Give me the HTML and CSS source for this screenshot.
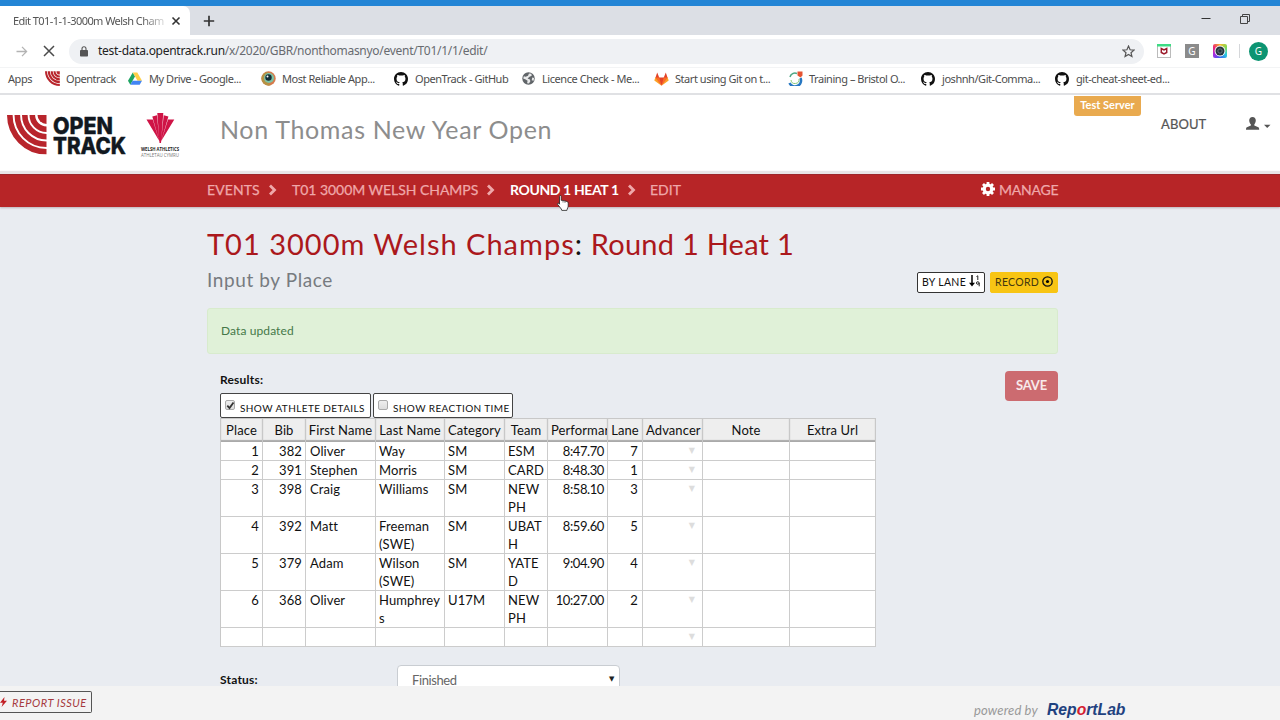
FILE: index.html
```html
<!DOCTYPE html>
<html lang="en">
<head>
<meta charset="utf-8">
<title>Edit T01-1-1-3000m Welsh Champs</title>
<link rel="stylesheet" href="styles.css">
</head>
<body>
<svg class="defs" width="0" height="0">
  <defs>
    <symbol id="github" viewBox="0 0 16 16"><path fill="#111" d="M8 0C3.58 0 0 3.58 0 8c0 3.54 2.29 6.53 5.47 7.59.4.07.55-.17.55-.38v-1.5c-2.23.48-2.7-.94-2.7-.94-.36-.92-.89-1.17-.89-1.17-.73-.5.05-.49.05-.49.8.06 1.23.83 1.23.83.71 1.23 1.87.87 2.33.67.07-.52.28-.87.5-1.07-1.78-.2-3.64-.89-3.64-3.95 0-.87.31-1.59.82-2.15-.08-.2-.36-1.02.08-2.12 0 0 .67-.21 2.2.82a7.6 7.6 0 0 1 4 0c1.53-1.04 2.2-.82 2.2-.82.44 1.1.16 1.92.08 2.12.51.56.82 1.27.82 2.15 0 3.07-1.87 3.75-3.65 3.95.29.25.54.73.54 1.48v2.2c0 .21.15.46.55.38A8 8 0 0 0 16 8c0-4.42-3.58-8-8-8z"/></symbol>
    <symbol id="track" viewBox="0 0 40 40"><path fill="#b8252c" d="M30.500 0.500H39.500V9.500A9 9 0 0 1 30.500 0.500z"/><g fill="none" stroke="#b8252c" stroke-width="5.600"><path d="M25.300 .5A14.200 14.200 0 0 0 39.500 14.700"/><path d="M17.800 .5A21.700 21.700 0 0 0 39.500 22.200"/><path d="M10.300 .5A29.200 29.200 0 0 0 39.500 29.700"/><path d="M2.800 .5A36.700 36.700 0 0 0 39.500 37.200"/></g></symbol>
    <symbol id="chev" viewBox="0 0 10 12"><path d="M2 1.500 6.500 6 2 10.500" fill="none" stroke="#efa8aa" stroke-width="2.800"/></symbol>
  </defs>
</svg>

<div class="tabs">
  <div class="tab"><span class="tab-title">Edit T01-1-1-3000m Welsh Cham</span>
    <svg width="10" height="10" viewBox="0 0 10 10"><path d="M1.500 1.500l7 7m0-7l-7 7" stroke="#333" stroke-width="1.600"/></svg></div>
  <svg class="plus" width="12" height="12" viewBox="0 0 12 12"><path d="M6 .8v10.400M.8 6h10.400" stroke="#333" stroke-width="1.700"/></svg>
  <div class="win">
    <svg width="10" height="10" viewBox="0 0 10 10"><path d="M.5 4.500h9" stroke="#333"/></svg>
    <svg width="10" height="10" viewBox="0 0 10 10" fill="none" stroke="#444"><path d="M.5 2.500h7v7h-7zM2.500 2.500v-2h7v7h-2"/></svg>
  </div>
</div>

<div class="toolbar">
  <svg class="fwd" width="12" height="11" viewBox="0 0 13 12" fill="none" stroke="#b3b3b3" stroke-width="1.400"><path d="M.5 6h10.500M6.500 1l5 5-5 5"/></svg>
  <svg class="stop" width="12" height="12" viewBox="0 0 12 12"><path d="M1 1l10 10m0-10L1 11" stroke="#4b4b4b" stroke-width="1.500"/></svg>
  <div class="url">
    <svg width="8" height="11" viewBox="0 0 8 11"><rect y="4" width="8" height="6.500" rx=".8" fill="#555"/><path d="M2 4.500V2.700a2 2 0 0 1 4 0v1.800" fill="none" stroke="#555" stroke-width="1.100"/></svg>
    <span class="addr"><b>test-data.opentrack.run</b>/x/2020/GBR/nonthomasnyo/event/T01/1/1/edit/</span>
    <svg width="13" height="13" viewBox="0 0 14 14"><path d="M7 1.200l1.700 3.900 4.200.4-3.200 2.800 1 4.200L7 10.300l-3.700 2.200 1-4.200L1.100 5.500l4.200-.4z" fill="none" stroke="#555" stroke-width="1.300"/></svg>
  </div>
  <div class="exts">
    <svg width="14" height="14" viewBox="0 0 14 14"><rect x=".5" y=".5" width="13" height="13" fill="#fff" stroke="#bbb"/><path fill="#3ddc84" d="M0 0h14v2.500H0z"/><path d="M4.300 4.500v4L7 10l2.700-1.500v-4L7 6z" fill="none" stroke="#9c1b2b" stroke-width="1.500"/></svg>
    <svg width="14" height="14" viewBox="0 0 14 14"><path fill="#8b8b8b" d="M0 0h14v14H0z"/><text x="7" y="10.500" text-anchor="middle" class="g-mark">G</text></svg>
    <div class="camera"><svg width="14" height="14" viewBox="0 0 14 14"><circle cx="7" cy="7" r="5.400" fill="#fff"/><circle cx="7" cy="7" r="4.500" fill="#26343d"/><circle cx="7" cy="7" r="2.200" fill="none" stroke="#63757f"/></svg></div>
    <span class="sep"></span>
    <span class="avatar">G</span>
  </div>
</div>

<div class="bookmarks">
  <span class="bm">Apps</span>
  <span class="bm"><svg width="15" height="15"><use href="#track"/></svg>Opentrack</span>
  <span class="bm"><svg width="14" height="13" viewBox="0 0 14 13"><path fill="#1da462" d="M4.800.5 0 8.800l2.300 3.900L7 4.400z"/><path fill="#ffcf48" d="M4.800.5h4.500L14 8.700H9.500z"/><path fill="#4285f4" d="M4.600 8.700H14l-2.300 4H2.300z"/></svg>My Drive - Google...</span>
  <span class="bm"><svg width="15" height="15" viewBox="0 0 15 15"><circle cx="7.500" cy="7.500" r="7.200" fill="#d67b4c"/><path d="M1 5A7 7 0 0 0 10 14Q4 11 7 1Q3 1 1 5" fill="#b59244"/><circle cx="8" cy="7" r="5" fill="#7cc2a5"/><circle cx="7.500" cy="6.500" r="3.200" fill="#152d36"/><circle cx="6.500" cy="5.500" r="1" fill="#fff"/></svg>Most Reliable App...</span>
  <span class="bm"><svg width="14" height="14"><use href="#github"/></svg>OpenTrack - GitHub</span>
  <span class="bm wide"><svg width="13" height="13" viewBox="0 0 14 14"><circle cx="7" cy="7" r="6.700" fill="#616569"/><path d="M7.500 1.500 6.500 4 4 5 2 4.500 1.300 7 4 8l2 1.500L5.500 12l2 .3L9 10l-.500-2L6 7l2-2 2.500-1L10 2zM11 6l2 .5-.500 3L10.500 9z" fill="#e9eaeb"/></svg>Licence Check - Me...</span>
  <span class="bm"><svg width="15" height="14" viewBox="0 0 15 14"><path fill="#fca326" d="M.3 8.500 1.500 5 7.500 13.500 13.500 5l1.200 3.500-7.200 5.300z"/><path fill="#e24329" d="M1.500 5.500 3.200.5l2 5h4.600l2-5 1.700 5-6 8z"/><path fill="#fc6d26" d="M1.500 5.500h3.700l2.300 8zM13.500 5.500H9.800l-2.300 8z"/></svg>Start using Git on t...</span>
  <span class="bm"><svg width="15" height="15" viewBox="0 0 15 15" fill="none" stroke-width="2"><path d="M2 6a5 5 0 0 1 7-3.500" stroke="#50a886" stroke-width="1.500"/><path d="M12.500 7A5.500 5.500 0 0 1 1.500 12" stroke="#2777c2" stroke-width="2.500"/><path d="M11 8A4 4 0 0 1 3 9" stroke="#8ac978" stroke-width="1"/><path d="M9.500 .5h5v4l-2 2-3-2z" fill="#e55432"/></svg>Training – Bristol O...</span>
  <span class="bm"><svg width="14" height="14"><use href="#github"/></svg>joshnh/Git-Comma...</span>
  <span class="bm"><svg width="14" height="14"><use href="#github"/></svg>git-cheat-sheet-ed...</span>
</div>

<header class="site">
  <svg class="logo" width="122" height="42" viewBox="0 0 122 42"><use href="#track" width="40" height="40" y="0.500"/>
    <g class="logo-text"><text x="46" y="20" textLength="60" lengthAdjust="spacingAndGlyphs">OPEN</text><text x="46" y="40" textLength="73" lengthAdjust="spacingAndGlyphs">TRACK</text></g></svg>
  <svg class="welsh" width="40" height="46" viewBox="0 0 40 46"><path fill="#cf1446" d="M6.500 7.500h6.300l6.200 21zM12.300 4.500l4.700-1.200L19.500 30zM17.300 1h6L21 31h-1.500zM23.700 3.300l4.700 1.200L21 30zM28 7.500h6.300L21.500 28.500z"/>
    <text x="1" y="38.500" textLength="38" lengthAdjust="spacingAndGlyphs" class="w1">WELSH ATHLETICS</text><text x="1" y="44.500" textLength="38" lengthAdjust="spacingAndGlyphs" class="w2">ATHLETAU CYMRU</text></svg>
  <h2 class="meet">Non Thomas New Year Open</h2>
  <span class="test">Test Server</span>
  <span class="about">ABOUT</span>
  <svg class="user" width="25" height="14" viewBox="0 0 25 14" fill="#555"><path d="M6.500 0C8.600 0 9.900 1.500 9.800 3.600 9.700 5.300 9 6.700 8.300 7.500v1l4 1.700c.7.300.9 1.200.9 2.500H0c0-1.300.2-2.200.9-2.500l4-1.700v-1C4 6.700 3.300 5.300 3.200 3.600 3.100 1.500 4.400 0 6.500 0zM18 7.700h6.500L21.200 11.100z"/></svg>
</header>

<nav class="crumbs">
  <div class="inner">
    <span class="c1">EVENTS</span><svg width="10" height="12"><use href="#chev"/></svg>
    <span class="c2">T01 3000M WELSH CHAMPS</span><svg width="10" height="12"><use href="#chev"/></svg>
    <span class="c3">ROUND 1 HEAT 1</span><svg width="10" height="12"><use href="#chev"/></svg>
    <span class="c4">EDIT</span>
    <span class="manage"><svg width="14" height="14" viewBox="0 0 14 14"><circle cx="7" cy="7" r="3.800" fill="none" stroke="#fff" stroke-width="3.200"/><path d="M7 0v3M7 11v3M0 7h3M11 7h3M2 2l2.200 2.200M9.800 9.800 12 12M12 2 9.800 4.200M4.200 9.800 2 12" stroke="#fff" stroke-width="2.800"/></svg>MANAGE</span>
  </div>
  <svg class="cursor" width="12" height="16" viewBox="0 0 12 16"><path d="M2.500 1.300c0-1 1.700-1 1.700 0v4l1.600.2 1.500.3 1.500.4c1.500.3 2.400.8 2.400 2v3c0 1.200-.8 1.700-1 3l-.3 1.200H4.800L4.300 14 .7 9.500c-.7-1 .4-1.800 1.200-1l.6.7z" fill="#fff" stroke="#222" stroke-width=".8"/><path d="M6 5.600v2M8 6v2" stroke="#555" stroke-width=".7"/></svg>
</nav>

<main class="content">
  <h1><span>T01 3000m Welsh Champs</span>: <span class="round">Round 1 Heat 1</span></h1>
  <div class="subrow">
    <h3>Input by Place</h3>
    <span class="btn lane">BY LANE<svg width="11" height="12" viewBox="0 0 11 12"><path d="M3 0v9" stroke="#111" stroke-width="1.600"/><path d="M0 7.800h6L3 11.500z"/><path d="M7.500 1.500 8.800.8V5" fill="none" stroke="#222"/><circle cx="8.800" cy="8" r="1.300" fill="none" stroke="#222"/><path d="M10.200 8v3.300" stroke="#222"/></svg></span>
    <span class="btn record">RECORD<svg width="11" height="11" viewBox="0 0 11 11"><circle cx="5.500" cy="5.500" r="4.700" fill="none" stroke="#111" stroke-width="1.300"/><circle cx="5.500" cy="5.500" r="1.600"/></svg></span>
  </div>
  <div class="alert">Data updated</div>
  <div class="form">
    <div class="results-head"><b class="label">Results:</b><span class="save">SAVE</span></div>
    <div class="toggles">
      <span class="toggle details"><span class="check on"><svg width="9" height="9" viewBox="0 0 9 9"><path d="M1.300 4.700 3.500 7 7.500 1.500" fill="none" stroke="#333" stroke-width="1.800"/></svg></span>SHOW ATHLETE DETAILS</span>
      <span class="toggle reaction"><span class="check"></span>SHOW REACTION TIME</span>
    </div>
    <table>
      <colgroup><col class="k42"><col class="k43"><col class="k70"><col class="k69"><col class="k60"><col class="k43"><col class="k60"><col class="k35"><col class="k60"><col class="k87"><col class="k86"></colgroup>
      <thead><tr><th>Place</th><th>Bib</th><th>First Name</th><th>Last Name</th><th>Category</th><th>Team</th><th class="clip">Performar</th><th>Lane</th><th class="clip">Advancer</th><th>Note</th><th>Extra Url</th></tr></thead>
      <tbody>
        <tr class="r19"><td>1</td><td>382</td><td>Oliver</td><td>Way</td><td>SM</td><td>ESM</td><td>8:47.70</td><td>7</td><td>▼</td><td></td><td></td></tr>
        <tr class="r19"><td>2</td><td>391</td><td>Stephen</td><td>Morris</td><td>SM</td><td>CARD</td><td>8:48.30</td><td>1</td><td>▼</td><td></td><td></td></tr>
        <tr class="r37"><td>3</td><td>398</td><td>Craig</td><td>Williams</td><td>SM</td><td>NEW<br>PH</td><td>8:58.10</td><td>3</td><td>▼</td><td></td><td></td></tr>
        <tr class="r37"><td>4</td><td>392</td><td>Matt</td><td>Freeman<br>(SWE)</td><td>SM</td><td>UBAT<br>H</td><td>8:59.60</td><td>5</td><td>▼</td><td></td><td></td></tr>
        <tr class="r37"><td>5</td><td>379</td><td>Adam</td><td>Wilson<br>(SWE)</td><td>SM</td><td>YATE<br>D</td><td>9:04.90</td><td>4</td><td>▼</td><td></td><td></td></tr>
        <tr class="r37"><td>6</td><td>368</td><td>Oliver</td><td>Humphrey<br>s</td><td>U17M</td><td>NEW<br>PH</td><td>10:27.00</td><td>2</td><td>▼</td><td></td><td></td></tr>
        <tr class="r19"><td></td><td></td><td></td><td></td><td></td><td></td><td></td><td></td><td>▼</td><td></td><td></td></tr>
      </tbody>
    </table>
    <div class="status"><b class="label">Status:</b><span class="select">Finished<i>▼</i></span></div>
  </div>
</main>

<footer class="foot">
  <span class="issue"><svg width="7" height="10" viewBox="0 0 7 10"><path d="M4.500 0 0 5.700h2.800L1.600 10 7 3.800H4z" fill="#c22026"/></svg>REPORT ISSUE</span>
  <span class="powered">powered by</span>
  <span class="rl">Rep<em>o</em>rtLab</span>
</footer>
</body>
</html>
```
FILE: styles.css
```css
* { box-sizing: border-box; }
body { margin: 0; width: 1280px; height: 720px; overflow: hidden; display: flex; flex-direction: column; background: #fff; font-family: Lato, "Open Sans", sans-serif; color: #111; }
svg { flex: none; display: block; }
.defs { position: absolute; }
h1, h2, h3 { margin: 0; font-weight: 400; }

/* browser chrome */
.tabs, .toolbar, .bookmarks { font-family: "Noto Sans", sans-serif; flex: none; }
.tabs { height: 35px; border-top: 6px solid #2385d5; background: #dcdfe5; display: flex; align-items: center; }
.tab { width: 190px; height: 29px; background: #fff; border-radius: 0 7px 0 0; display: flex; align-items: center; padding-left: 13px; }
.tab-title { width: 153px; margin-right: 5px; font-size: 11px; letter-spacing: -.56px; white-space: nowrap; overflow: hidden; color: #555; -webkit-mask-image: linear-gradient(90deg, #000 84%, rgba(0,0,0,.15)); }
.plus { margin-left: 13px; }
.win { margin-left: auto; display: flex; gap: 29px; padding: 0 30px 3px 0; }
.toolbar { height: 33px; display: flex; align-items: center; border-bottom: 1px solid #f3f4f5; }
.fwd { margin-left: 16px; }
.stop { margin-left: 15px; }
.url { margin-left: 14px; width: 1075px; height: 25px; border-radius: 13px; background: #eff1f4; display: flex; align-items: center; padding: 0 9px 0 11px; }
.addr { flex: 1; margin-left: 10px; font-size: 12px; color: #686b70; letter-spacing: -.28px; line-height: 24px; }
.addr b { font-weight: 400; color: #222; }
.exts { flex: 1; display: flex; align-items: center; padding-left: 13px; }
.exts > svg { margin-right: 14px; }
.g-mark { font: 10px "Noto Sans", sans-serif; fill: #fff; }
.camera { width: 14px; height: 14px; border-radius: 2px; background: conic-gradient(#f5bf2c, #7ed957, #2acbe0, #3a62f0, #a52be2, #ed2476, #f5bf2c); }
.sep { width: 1px; height: 14px; background: #d5d7da; margin: 0 9px 0 12px; }
.avatar { width: 19px; height: 19px; border-radius: 50%; background: #0c9472; color: #fff; font-size: 10px; line-height: 19px; text-align: center; }
.bookmarks { height: 27px; display: grid; grid-template-columns: 37px 83px 133px 133px 127px 133px 134px 133px 134px 150px; padding: 0 0 4px 8px; border-bottom: 2px solid #e0e1e4; align-items: center; font-size: 11px; color: #4d4d4d; white-space: nowrap; letter-spacing: -.45px; }
.bm { display: flex; align-items: center; gap: 7px; }
.bm:nth-child(2), .bm:nth-child(4), .bm:nth-child(7), .bm:nth-child(8) { gap: 6px; }
.wide { padding-left: 1px; }

/* site header */
.site { height: 76px; flex: none; display: flex; align-items: flex-start; position: relative; }
.logo { margin: 19px 0 0 7px; }
.logo-text { font: 800 23px Inter, sans-serif; fill: #111820; stroke: #111820; stroke-width: .4px; stroke-linejoin: round; }
.welsh { margin: 17px 0 0 11px; }
.w1 { font: 700 4.500px "Open Sans", sans-serif; fill: #222; }
.w2 { font: 4.500px "Open Sans", sans-serif; fill: #777; }
.meet { margin: 18px 0 0 40px; width: 854px; font-size: 25px; line-height: 32px; color: #8d8d8d; letter-spacing: .67px; }
.test { width: 67px; height: 20px; margin-top: 1px; background: #e9aa4f; color: #fff; font-size: 11px; font-weight: 700; text-align: center; line-height: 18px; border-radius: 0 0 3px 3px; }
.about { margin: 20px 0 0 20px; font-size: 13px; line-height: 18px; color: #555; letter-spacing: .1px; -webkit-text-stroke: .2px; }
.user { position: absolute; left: 1246px; top: 22px; }

/* breadcrumb bar */
.crumbs { flex: none; height: 36px; background: #b72527; border-top: 3px solid #e8e4e6; position: relative; box-shadow: 0 1px 2px rgba(90,40,50,.3), inset 0 1px #9d262b; font-size: 14px; line-height: 20px; color: #efa8aa; -webkit-text-stroke: .25px; }
.inner { width: 852px; height: 32px; margin-left: 207px; display: flex; align-items: center; }
.inner > svg { margin-left: 8px; }
.c2, .c3, .c4 { margin-left: 14px; }
.c1 { width: 53px; letter-spacing: .1px; } .c2 { width: 186px; letter-spacing: -.04px; } .c3 { width: 109px; color: #fff; font-weight: 700; letter-spacing: -.38px; -webkit-text-stroke: 0; } .c4 { margin-left: 13px; }
.manage { margin-left: auto; width: 78px; display: flex; gap: 4px; align-items: center; white-space: nowrap; letter-spacing: -.2px; }
.manage svg { margin-top: -2px; }
.c1, .c2, .c3, .c4 { white-space: nowrap; }
.cursor { position: absolute; left: 557px; top: 21px; }

/* event content */
.content { flex: none; height: 479px; overflow: hidden; background: #e9ecf1; padding: 19px 0 0 207px; }
h1 { font-size: 29px; line-height: 36px; color: #111; letter-spacing: .67px; white-space: nowrap; }
h1 span { color: #ab181c; letter-spacing: 1px; }
h1 .round { letter-spacing: .25px; }
.subrow { width: 851px; height: 38px; display: flex; align-items: center; padding-top: 2px; }
h3 { flex: 1; font-size: 19px; line-height: 28px; margin-top: -4px; color: #777b80; letter-spacing: .6px; }
.btn { height: 21px; border: 1px solid #333; border-radius: 2px; background: #fff; font-size: 10.500px; letter-spacing: .3px; display: flex; align-items: center; justify-content: space-between; padding: 0 4px; white-space: nowrap; }
.lane { width: 68px; margin-right: 5px; }
.record { width: 68px; background: #f8c514; border-color: #f8c514; color: #43380f; }
.btn svg { margin-top: -2px; }
.alert { margin-top: 8px; width: 851px; height: 46px; border: 1px solid #d8ebcd; border-radius: 3px; background: #e0f1d8; color: #457848; font-size: 12px; line-height: 44px; padding-left: 13px; letter-spacing: .1px; }
.form { padding-left: 13px; }
.results-head { width: 838px; height: 39px; padding-top: 17px; display: flex; justify-content: space-between; }
.label { font-size: 12px; line-height: 18px; letter-spacing: .2px; }
.save { width: 53px; height: 30px; border-radius: 4px; background: #cc6b70; color: #f8e9ea; font-size: 13px; line-height: 29px; text-align: center; font-weight: 700; letter-spacing: -.2px; }
.toggles { display: flex; gap: 2px; height: 26px; position: relative; z-index: 1; }
.toggle { height: 25px; background: #fff; border: 1px solid #444; border-radius: 2px; padding: 3px 0 0 4px; display: flex; gap: 5px; font-size: 10px; letter-spacing: .4px; line-height: 22px; white-space: nowrap; }
.details { width: 151px; } .reaction { width: 140px; }
.check { flex: none; width: 10px; height: 10px; margin-top: 3px; border: 1px solid #aaa; border-radius: 2px; background: linear-gradient(#eee, #ddd); }
table { border-collapse: separate; border-spacing: 0; table-layout: fixed; width: 656px; margin-top: -1px; background: #fff; border-left: 1px solid #c8c8c8; font-size: 13px; letter-spacing: .1px; }
.k35 { width: 35px; } .k42 { width: 42px; } .k43 { width: 43px; } .k60 { width: 60px; } .k69 { width: 69px; } .k70 { width: 70px; } .k86 { width: 86px; } .k87 { width: 87px; }
th { height: 24px; padding: 0 0 2px; background: #eee; font-weight: 400; border: solid #c8c8c8; border-width: 1px 1px 0 0; box-shadow: inset 0 -2px 1px #aaa; overflow: hidden; white-space: nowrap; line-height: 20px; }
.clip { text-align: left; padding-left: 3px; }
td { padding: 0 4px; border: solid #ccc; border-width: 0 1px 1px 0; vertical-align: top; line-height: 18px; white-space: nowrap; }
td:nth-child(4), td:nth-child(5), td:nth-child(6) { padding-left: 3px; }
td:nth-child(1), td:nth-child(2), td:nth-child(7), td:nth-child(8) { text-align: right; }
td:nth-child(1), td:nth-child(2), td:nth-child(7) { padding-right: 3px; }
td:nth-child(7) { letter-spacing: -.4px; }
td:nth-child(9) { text-align: right; font: 8px/17px "DejaVu Sans", sans-serif; color: #ddd; padding-right: 7px; }
.r19 { height: 19px; } .r37 { height: 37px; }
.status { display: flex; align-items: flex-start; margin-top: 18px; }
.status .label { width: 177px; margin-top: 6px; }
.select { width: 223px; height: 32px; border: 1px solid #c9cdd2; border-radius: 4px; background: #fff; color: #666; font-size: 13px; line-height: 29px; padding: 0 5px 0 14px; display: flex; justify-content: space-between; letter-spacing: -.4px; }
.select i { font: 7px/27px "DejaVu Sans", sans-serif; color: #222; }

.foot { flex: 1; background: #f3f3f3; display: flex; align-items: flex-start; }
.issue { width: 92px; height: 22px; margin-top: 5px; border: 1px solid #555; border-left: 0; border-radius: 0 2px 2px 0; display: flex; align-items: center; gap: 5px; color: #a63a3e; font-size: 11px; font-style: italic; white-space: nowrap; letter-spacing: .5px; }
.powered { margin: 15px 0 0 882px; width: 73px; font-size: 13px; line-height: 18px; font-style: italic; color: #999; letter-spacing: .15px; }
.rl { font: italic 700 15.700px/20px "Liberation Sans", sans-serif; color: #1f4280; margin-top: 14px; }
.rl em { color: #d51f32; }
```
